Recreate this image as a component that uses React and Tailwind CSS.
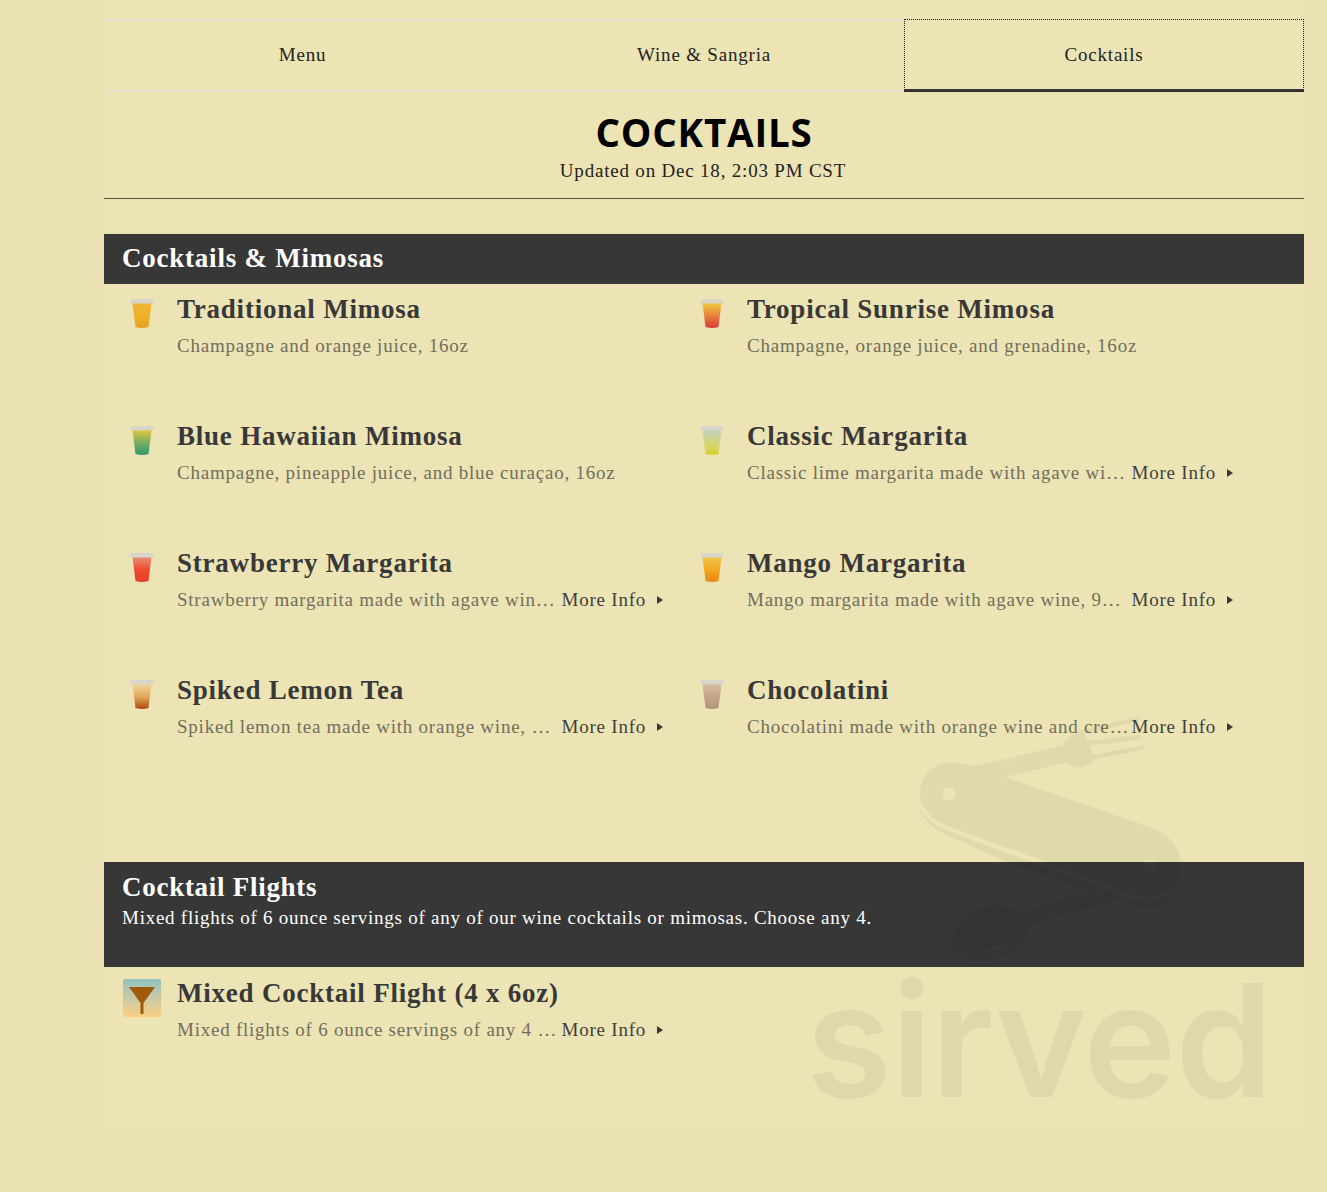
const TABS = [
  { label: 'Menu' },
  { label: 'Wine & Sangria' },
  { label: 'Cocktails', active: true },
];

const COCKTAILS = [
  { name: 'Traditional Mimosa', desc: 'Champagne and orange juice, 16oz', stops: ['#efb535', '#eeb02c', '#e6a020'] },
  { name: 'Tropical Sunrise Mimosa', desc: 'Champagne, orange juice, and grenadine, 16oz', stops: ['#f2c93c', '#e8803a', '#d83c3a'] },
  { name: 'Blue Hawaiian Mimosa', desc: 'Champagne, pineapple juice, and blue curaçao, 16oz', stops: ['#e6c63e', '#78ae62', '#2c9a68'] },
  { name: 'Classic Margarita', desc: 'Classic lime margarita made with agave wine, 9oz', more: true, stops: ['#c3d2bf', '#d2d67c', '#d9d12c'] },
  { name: 'Strawberry Margarita', desc: 'Strawberry margarita made with agave wine, 9oz and fresh fruit', more: true, stops: ['#e7907a', '#f04c30', '#ea3b28'] },
  { name: 'Mango Margarita', desc: 'Mango margarita made with agave wine, 9oz and fresh mango', more: true, stops: ['#f1c04f', '#f3a920', '#ec8516'] },
  { name: 'Spiked Lemon Tea', desc: 'Spiked lemon tea made with orange wine, with lemon and tea', more: true, stops: ['#efd9a2', '#e3a95a', '#ab4810'] },
  { name: 'Chocolatini', desc: 'Chocolatini made with orange wine and cream of chocolate', more: true, stops: ['#d6bea0', '#c2a68c', '#b3957c'] },
];

function Cup({ id, stops }) {
  return (
    <svg viewBox="0 0 40 40" className="w-10 h-10 shrink-0 blur-[0.4px]">
      <defs>
        <linearGradient id={id} x1="0" y1="0" x2="0" y2="1">
          <stop offset="0" stopColor={stops[0]} />
          <stop offset="0.5" stopColor={stops[1]} />
          <stop offset="1" stopColor={stops[2]} />
        </linearGradient>
      </defs>
      <path d="M10.5 9 L29.5 9 L26.5 33 Q20 35 13.5 33 Z" fill={`url(#${id})`} />
      <rect x="8" y="5" width="24" height="4.5" rx="2.2" fill="#d8d6c8" />
    </svg>
  );
}

function FlightIcon() {
  return (
    <div className="w-10 h-10 shrink-0 p-px">
      <div className="w-full h-full rounded-[2px] bg-gradient-to-b from-[#8fc2bf] to-[#fbcf83] shadow-[0_0_2px_#f7dc9c]">
        <svg viewBox="0 0 38 38" className="w-full h-full">
          <path d="M6 8 L32 8 L20.5 24 L20.5 35 L17.5 35 L17.5 24 Z" fill="#a1590a" />
        </svg>
      </div>
    </div>
  );
}

function MenuItem({ item, icon }) {
  return (
    <div className="flex pl-[18px] pt-[10px] h-[127px]">
      {icon}
      <div className="ml-[15px] w-[486px] -mt-[10px]">
        <h3 className="pt-[7px] text-[27px] leading-[36px] font-bold tracking-[0.78px] text-[#383838]">{item.name}</h3>
        <div className="flex items-center mt-[6px] text-[19px] leading-[26px] tracking-[0.76px]">
          <p className={item.more ? 'truncate w-[383px] shrink-0 text-[#716e5e]' : 'whitespace-nowrap text-[#716e5e]'}>{item.desc}</p>
          {item.more && (
            <span className="ml-auto flex items-center text-[#3f3f3c]">
              More Info
              <svg viewBox="0 0 6 8" className="ml-[11px] w-[6px] h-2"><path d="M0 0 L6 4 L0 8 Z" fill="#383838" /></svg>
            </span>
          )}
        </div>
      </div>
    </div>
  );
}

function Watermark() {
  return (
    <div className="absolute left-[790px] top-[700px] w-[537px] h-[440px] pointer-events-none overflow-hidden">
      <svg viewBox="0 0 900 840" className="absolute left-[110px] top-0 w-[300px] h-[280px]">
        <g fill="#000" stroke="#000" opacity="0.045">
          <path stroke="none" fillRule="evenodd" d="M60 280 C60 225 100 188 155 188 Q195 188 225 198 L490 135 L505 185 L315 232 L760 385 C810 405 842 445 842 490 C842 545 805 590 745 590 Q710 590 680 575 L135 375 C90 355 60 320 60 280 Z M147 263 A19 19 0 1 0 147 301 A19 19 0 1 0 147 263 Z M752 480 A20 20 0 1 0 752 518 A20 20 0 1 0 752 480 Z" />
          <path stroke="none" d="M490 135 C500 110 520 100 545 92 L570 130 L580 178 C565 205 525 215 500 185 Z" />
          <path fill="none" strokeWidth="14" strokeLinecap="round" d="M540 98 L712 58 M565 130 L718 112 M582 172 L726 143" />
          <path stroke="none" d="M52 305 C58 345 90 378 125 398 L330 490 L700 618 Q745 630 790 615 C815 600 828 580 832 560 C815 590 785 604 745 604 Q710 604 670 590 L420 496 L130 388 C90 368 62 340 52 305 Z" />
          <path stroke="none" d="M555 572 L645 602 L430 662 C395 674 385 695 368 728 C340 772 260 792 205 780 C165 770 145 735 165 690 C190 640 250 612 300 618 C335 622 355 635 375 640 Z" />
        </g>
        <path d="M245 752 C285 750 325 735 340 702" fill="none" stroke="#3c3c3c" strokeWidth="4" />
      </svg>
      <span className="absolute left-[16px] top-[240px] font-['Inter',sans-serif] font-semibold text-[157px] leading-[200px] tracking-[-1px] text-black/5 whitespace-nowrap">sirved</span>
    </div>
  );
}

export default function App() {
  return (
    <div className="relative min-h-[1192px] bg-[#eae2b2] font-['Liberation_Serif',serif] overflow-hidden">
      <div className="ml-[104px] w-[1200px] h-[1130px] bg-[#ece4b4] pt-[19px]">
        <nav className="flex">
          {TABS.map((tab, i) => (
            <div
              key={tab.label}
              className={
                tab.active
                  ? 'w-[400px] h-[73px] pt-[2px] flex items-center justify-center text-[19px] tracking-[0.8px] text-[#222] outline-1 outline-dotted -outline-offset-1 outline-[#222] border-b-[3px] border-[#383838]'
                  : i === 0
                    ? 'w-[400px] h-[73px] pr-[3px] flex items-center justify-center text-[19px] tracking-[0.8px] text-[#222] border-t-2 border-b-2 border-[#e6e3d2]'
                    : 'w-[400px] h-[73px] flex items-center justify-center text-[19px] tracking-[0.8px] text-[#222] border-t-2 border-b-2 border-[#e6e3d2]'
              }
            >
              {tab.label}
            </div>
          ))}
        </nav>

        <header className="h-[107px] border-b border-[#55544a] text-center pt-[18px]">
          <h1 className="font-['Open_Sans',sans-serif] font-bold text-[38.5px] tracking-[0.8px] leading-[44px] text-black">COCKTAILS</h1>
          <p className="pr-[2px] text-[19px] leading-[24px] tracking-[0.8px] mt-[5px] text-[#222]">Updated on Dec 18, 2:03 PM CST</p>
        </header>

        <section className="mt-[35px]">
          <div className="h-[50px] bg-[#373737] px-[18px] pb-[2px] flex items-center">
            <h2 className="text-[27px] font-bold tracking-[0.77px] text-white">Cocktails &amp; Mimosas</h2>
          </div>
          <div className="grid grid-cols-[570px_570px]">
            {COCKTAILS.map((item, i) => (
              <MenuItem key={item.name} item={item} icon={<Cup id={`cup-${i}`} stops={item.stops} />} />
            ))}
          </div>
        </section>

        <section className="mt-[70px]">
          <div className="h-[105px] bg-[#373737] px-[18px] pt-[7px] text-white">
            <h2 className="text-[27px] leading-[36px] font-bold tracking-[0.72px]">Cocktail Flights</h2>
            <p className="text-[19px] leading-[24px] tracking-[0.75px] mt-[1px]">Mixed flights of 6 ounce servings of any of our wine cocktails or mimosas. Choose any 4.</p>
          </div>
          <div className="grid grid-cols-[570px_570px] pt-px">
            <MenuItem
              item={{ name: 'Mixed Cocktail Flight (4 x 6oz)', desc: 'Mixed flights of 6 ounce servings of any 4 cocktails or mimosas on our menu', more: true }}
              icon={<FlightIcon />}
            />
          </div>
        </section>
      </div>
      <Watermark />
    </div>
  );
}
